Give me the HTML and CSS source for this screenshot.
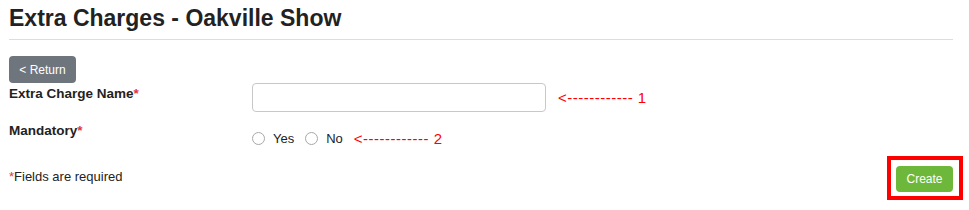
FILE: index.html
```html
<!DOCTYPE html>
<html lang="en">
<head>
    <meta charset="UTF-8">
    <title>Extra Charges</title>
    <link rel="stylesheet" href="styles.css">
</head>
<body>
    <div class="page">
        <h1 class="page-title">Extra Charges - Oakville Show</h1>
        <hr class="divider">

        <button class="btn-return">&lt; Return</button>

        <!-- Название -->
        <div class="form-row">
            <label class="form-label">Extra Charge Name<span class="req">*</span></label>
            <div class="form-field">
                <input type="text" class="text-input">
                <span class="note">&lt;------------ 1</span>
            </div>
        </div>

        <!-- Обязательно -->
        <div class="form-row row-radio">
            <label class="form-label">Mandatory<span class="req">*</span></label>
            <div class="form-field radio-group">
                <label class="radio"><span class="radio-circle"></span>Yes</label>
                <label class="radio"><span class="radio-circle"></span>No</label>
                <span class="note">&lt;------------ 2</span>
            </div>
        </div>

        <div class="form-footer">
            <span class="hint"><span class="req">*</span>Fields are required</span>
            <div class="highlight">
                <button class="btn-create">Create</button>
            </div>
        </div>
    </div>
</body>
</html>
```

FILE: styles.css
```css
body {
    margin: 0;
    padding: 0;
    background: white;
    color: #333;
    font-family: "Liberation Sans", Arial, sans-serif;
}
.page {
    padding: 5px 16px 0 9px;
}
.page-title {
    margin: 0;
    font-size: 23px;
    line-height: 26px;
    font-weight: bold;
    color: #222;
}
.divider {
    margin: 8px 0 0 0;
    border: none;
    border-top: 1px solid #ddd;
}
.btn-return {
    display: block;
    margin-top: 16px;
    width: 67px;
    height: 27px;
    padding: 0;
    background: #6e757c;
    color: white;
    border: none;
    border-radius: 4px;
    font-family: inherit;
    font-size: 12px;
}
.form-row {
    display: flex;
}
.form-label {
    width: 243px;
    padding-top: 3px;
    font-size: 13.5px;
    line-height: 16px;
    font-weight: bold;
    color: #222;
}
.req {
    color: #e4343f;
}
.form-field {
    display: flex;
    align-items: center;
}
.text-input {
    box-sizing: border-box;
    width: 294px;
    height: 29px;
    border: 1px solid #c8c8c8;
    border-radius: 4px;
    margin: 0;
}
.note {
    color: red;
    font-size: 15px;
    letter-spacing: 0.5px;
    margin-left: 12px;
}
.row-radio {
    margin-top: 8px;
}
.radio-group {
    padding-top: 9px;
    height: 18px;
    font-size: 13px;
    color: #222;
}
.radio {
    display: flex;
    align-items: center;
    margin-right: 11px;
}
.radio-circle {
    box-sizing: border-box;
    width: 13px;
    height: 13px;
    border: 1px solid #a8a8a8;
    border-radius: 50%;
    margin-right: 8px;
    background: white;
}
.radio-group .note {
    margin-left: 0;
}
.form-footer {
    display: flex;
    justify-content: space-between;
    align-items: center;
    margin-top: 9px;
    margin-right: -10px;
}
.hint {
    font-size: 13px;
    color: #222;
    margin-top: -4px;
}
.highlight {
    border: 4px solid red;
    padding: 6px 6px 4px 5px;
}
.btn-create {
    display: block;
    width: 57px;
    height: 26px;
    padding: 0;
    background: #6db83b;
    color: white;
    border: none;
    border-radius: 4px;
    font-family: inherit;
    font-size: 12px;
}
```
